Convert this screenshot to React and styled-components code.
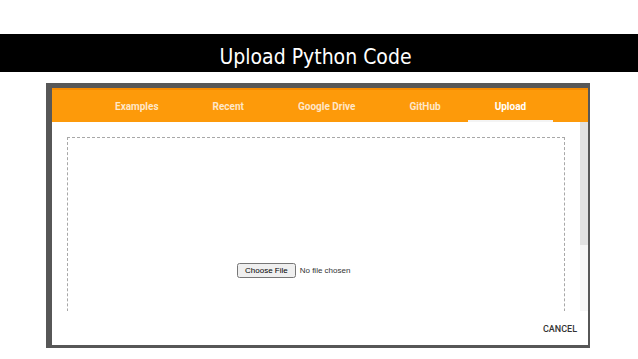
import styled, { createGlobalStyle } from "styled-components";

const GlobalStyles = createGlobalStyle`
  *{
    margin: 0;
    padding: 0;
    box-sizing: border-box;
  }
  html, body{
    background: #ffffff;
    font-family: "Roboto", "Liberation Sans", sans-serif;
  }
`;

const tabs = ["Examples", "Recent", "Google Drive", "GitHub", "Upload"];

function App() {
  return (
    <Page>
      <GlobalStyles />
      <TitleBar>
        <Title>Upload Python Code</Title>
      </TitleBar>
      <Stage>
        <Backdrop>
          <Dialog>
            <Header>
              {tabs.map((t) => (
                <Tab key={t} active={t === "Upload"}>
                  {t}
                </Tab>
              ))}
            </Header>
            <Body>
              <Content>
                <DropZone>
                  <FileInput type="file" />
                </DropZone>
              </Content>
              <ScrollTrack>
                <ScrollThumb />
              </ScrollTrack>
            </Body>
            <Footer>
              <CancelButton>CANCEL</CancelButton>
            </Footer>
          </Dialog>
        </Backdrop>
      </Stage>
    </Page>
  );
}

export default App;

const Page = styled.div`
  width: 638px;
  height: 359px;
  padding-top: 34px;
  overflow: hidden;
`;
const TitleBar = styled.header`
  height: 38px;
  background: #000000;
  display: flex;
  justify-content: center;
  align-items: center;
  padding-top: 8px;
`;
const Title = styled.h1`
  font-family: "DejaVu Sans", sans-serif;
  font-stretch: condensed;
  font-weight: 400;
  font-size: 21px;
  color: #ffffff;
  padding-right: 7px;
`;
const Stage = styled.div`
  padding: 11px 48px 0 46px;
`;
const Backdrop = styled.div`
  height: 265px;
  background: #575757;
  padding: 5px 2px 3px 6px;
`;
const Dialog = styled.div`
  height: 100%;
  background: #ffffff;
  display: flex;
  flex-direction: column;
`;
const Header = styled.nav`
  height: 34px;
  background: #fd9a0a;
  border-top: 2px solid #f68b00;
  display: flex;
  align-items: stretch;
  padding-left: 36px;
`;
const Tab = styled.div`
  padding: 3px 27px 0;
  display: flex;
  align-items: center;
  font-size: 10px;
  font-weight: 700;
  color: ${(p) => (p.active ? "#ffffff" : "rgba(255,255,255,0.78)")};
  border-bottom: 2px solid ${(p) => (p.active ? "#f4f4f4" : "transparent")};
`;
const Body = styled.div`
  height: 189px;
  display: flex;
  overflow: hidden;
`;
const Content = styled.div`
  flex: 1;
  padding: 15px 15px 0 15px;
`;
const DropZone = styled.div`
  height: 240px;
  border: 1px dashed #a8a8a8;
  padding: 120px 0 0 169px;
`;
const FileInput = styled.input`
  font-family: "Liberation Sans", sans-serif;
  font-size: 8px;
  color: #333333;
`;
const ScrollTrack = styled.div`
  width: 8px;
  background: #f6f6f6;
`;
const ScrollThumb = styled.div`
  height: 123px;
  background: #e2e2e2;
`;
const Footer = styled.div`
  flex: 1;
  display: flex;
  justify-content: flex-end;
  align-items: center;
  padding: 2px 11px 0 0;
`;
const CancelButton = styled.span`
  font-size: 9px;
  font-weight: 500;
  color: #333333;
`;
